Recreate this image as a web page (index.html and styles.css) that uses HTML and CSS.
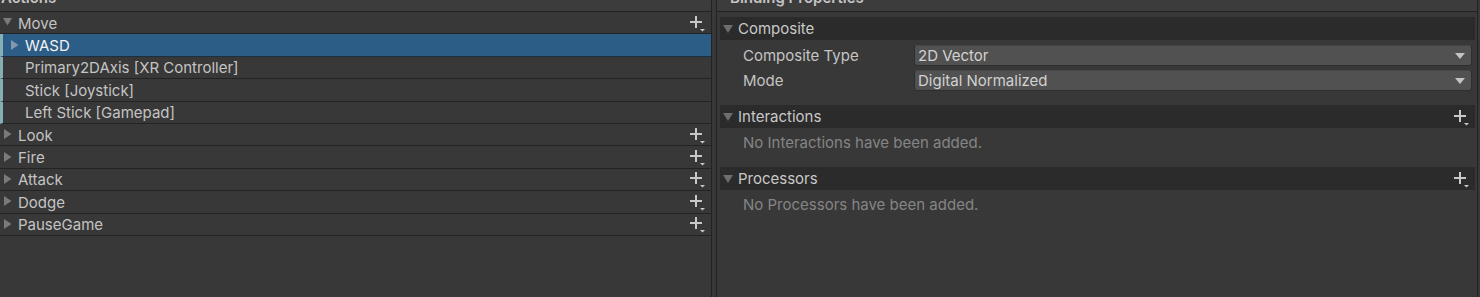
FILE: index.html
```html
<!DOCTYPE html>
<html>
<head>
<meta charset="utf-8">
<link rel="stylesheet" href="styles.css">
</head>
<body>
<div class="app">
  <div class="pane left">
    <div class="pane-head"><span class="pane-title">Actions</span></div>
    <div class="tree">
      <div class="row action">
        <svg class="fold" width="10" height="10" viewBox="0 0 10 10"><path d="M0 1H9L4.5 8.5Z"/></svg>
        <span class="label">Move</span>
        <svg class="plus" width="16" height="16" viewBox="0 0 16 16"><rect x="0" y="5" width="12" height="2"/><rect x="5" y="0" width="2" height="12"/><path d="M10 13H15L12.5 15.5Z"/></svg>
      </div>
      <div class="row binding selected">
        <svg class="fold" width="10" height="10" viewBox="0 0 10 10"><path d="M1 0V10L8.5 5Z"/></svg>
        <span class="label">WASD</span>
      </div>
      <div class="row binding"><span class="label">Primary2DAxis [XR Controller]</span></div>
      <div class="row binding"><span class="label">Stick [Joystick]</span></div>
      <div class="row binding"><span class="label">Left Stick [Gamepad]</span></div>
      <div class="row action">
        <svg class="fold" width="10" height="10" viewBox="0 0 10 10"><path d="M1 0V10L8.5 5Z"/></svg>
        <span class="label">Look</span>
        <svg class="plus" width="16" height="16" viewBox="0 0 16 16"><rect x="0" y="5" width="12" height="2"/><rect x="5" y="0" width="2" height="12"/><path d="M10 13H15L12.5 15.5Z"/></svg>
      </div>
      <div class="row action">
        <svg class="fold" width="10" height="10" viewBox="0 0 10 10"><path d="M1 0V10L8.5 5Z"/></svg>
        <span class="label">Fire</span>
        <svg class="plus" width="16" height="16" viewBox="0 0 16 16"><rect x="0" y="5" width="12" height="2"/><rect x="5" y="0" width="2" height="12"/><path d="M10 13H15L12.5 15.5Z"/></svg>
      </div>
      <div class="row action">
        <svg class="fold" width="10" height="10" viewBox="0 0 10 10"><path d="M1 0V10L8.5 5Z"/></svg>
        <span class="label">Attack</span>
        <svg class="plus" width="16" height="16" viewBox="0 0 16 16"><rect x="0" y="5" width="12" height="2"/><rect x="5" y="0" width="2" height="12"/><path d="M10 13H15L12.5 15.5Z"/></svg>
      </div>
      <div class="row action">
        <svg class="fold" width="10" height="10" viewBox="0 0 10 10"><path d="M1 0V10L8.5 5Z"/></svg>
        <span class="label">Dodge</span>
        <svg class="plus" width="16" height="16" viewBox="0 0 16 16"><rect x="0" y="5" width="12" height="2"/><rect x="5" y="0" width="2" height="12"/><path d="M10 13H15L12.5 15.5Z"/></svg>
      </div>
      <div class="row action">
        <svg class="fold" width="10" height="10" viewBox="0 0 10 10"><path d="M1 0V10L8.5 5Z"/></svg>
        <span class="label">PauseGame</span>
        <svg class="plus" width="16" height="16" viewBox="0 0 16 16"><rect x="0" y="5" width="12" height="2"/><rect x="5" y="0" width="2" height="12"/><path d="M10 13H15L12.5 15.5Z"/></svg>
      </div>
    </div>
  </div>
  <div class="splitter"></div>
  <div class="pane right">
    <div class="pane-head"><span class="pane-title">Binding Properties</span></div>
    <div class="props">
      <div class="section-head">
        <svg class="hfold" width="10" height="10" viewBox="0 0 10 10"><path d="M0 1H10L5 9Z"/></svg>
        <span>Composite</span>
      </div>
      <div class="section-body composite">
        <div class="field">
          <span class="field-label">Composite Type</span>
          <div class="dropdown"><span>2D Vector</span><svg class="caret" width="10" height="6" viewBox="0 0 10 6"><path d="M0 0H10L5 6Z"/></svg></div>
        </div>
        <div class="field">
          <span class="field-label">Mode</span>
          <div class="dropdown"><span>Digital Normalized</span><svg class="caret" width="10" height="6" viewBox="0 0 10 6"><path d="M0 0H10L5 6Z"/></svg></div>
        </div>
      </div>
      <div class="section-head">
        <svg class="hfold" width="10" height="10" viewBox="0 0 10 10"><path d="M0 1H10L5 9Z"/></svg>
        <span>Interactions</span>
        <svg class="plus" width="16" height="16" viewBox="0 0 16 16"><rect x="0" y="5" width="12" height="2"/><rect x="5" y="0" width="2" height="12"/><path d="M10 13H15L12.5 15.5Z"/></svg>
      </div>
      <div class="section-body message">No Interactions have been added.</div>
      <div class="section-head">
        <svg class="hfold" width="10" height="10" viewBox="0 0 10 10"><path d="M0 1H10L5 9Z"/></svg>
        <span>Processors</span>
        <svg class="plus" width="16" height="16" viewBox="0 0 16 16"><rect x="0" y="5" width="12" height="2"/><rect x="5" y="0" width="2" height="12"/><path d="M10 13H15L12.5 15.5Z"/></svg>
      </div>
      <div class="section-body message">No Processors have been added.</div>
    </div>
  </div>
</div>
</body>
</html>
```

FILE: styles.css
```css
* { box-sizing: border-box; }
html, body {
  margin: 0;
  padding: 0;
  width: 1480px;
  height: 297px;
  overflow: hidden;
  background: #383838;
  font-family: Inter, "Noto Sans", sans-serif;
  font-size: 15px;
  color: #c4c4c4;
}
.app {
  display: flex;
  height: 297px;
}
.pane {
  background: #383838;
  display: flex;
  flex-direction: column;
}
.left {
  width: 712px;
  border-right: 1px solid #232323;
}
.splitter {
  width: 4px;
  background: #383838;
}
.right {
  flex: 1;
  border-left: 1px solid #232323;
  border-right: 1px solid #232323;
  margin-right: 2px;
}
.pane-head {
  height: 12px;
  background: #3c3c3c;
  border-bottom: 1px solid #232323;
  overflow: hidden;
  flex: none;
}
.pane-title {
  display: block;
  font-weight: 600;
  line-height: 16px;
  margin-top: -10px;
  color: #c4c4c4;
}
.left .pane-title { padding-left: 1px; }
.right .pane-title { padding-left: 13px; }

.tree { display: flex; flex-direction: column; }
.row {
  height: 22.4px;
  border-bottom: 1px solid #232323;
  display: flex;
  align-items: center;
  flex: none;
}
.row .label { line-height: 18px; margin-top: 2px; }
.action { padding-left: 3px; }
.action .label { margin-left: 5px; }
.fold { fill: #7a7a7a; flex: none; margin-top: -1px; }
.binding {
  border-left: 3px solid #85afb4;
  padding-left: 22px;
}
.binding.selected {
  background: #2c5d87;
  border-bottom-color: #1b2f42;
  padding-left: 7px;
}
.binding.selected .fold { fill: #8198ad; }
.binding.selected .label { color: #f2f2f2; margin-left: 5px; }
.plus {
  fill: #c8c8c8;
  margin-left: auto;
  margin-right: 5px;
  margin-top: 2px;
  flex: none;
}

.props {
  display: flex;
  flex-direction: column;
  padding: 5px 2px 0 3px;
}
.section-head {
  height: 23px;
  background: #2b2b2b;
  display: flex;
  align-items: center;
  padding-left: 3px;
  color: #c8c8c8;
}
.section-head span { margin-left: 5px; }
.hfold { fill: #6e6e6e; flex: none; }
.section-head .plus { margin-right: 5px; }
.composite {
  padding: 3px 0 12px 23px;
}
.field {
  height: 25px;
  display: flex;
  align-items: center;
}
.field-label {
  width: 171px;
}
.dropdown {
  flex: 1;
  height: 21px;
  margin-right: 3px;
  background: #515151;
  border: 1px solid #2e2e2e;
  border-top-color: #454545;
  border-radius: 3px;
  display: flex;
  align-items: center;
  padding-left: 3px;
  color: #d2d2d2;
}
.dropdown .caret {
  margin-left: auto;
  margin-right: 6px;
  fill: #c4c4c4;
}
.message {
  height: 39px;
  padding-left: 23px;
  padding-top: 4px;
  line-height: 22px;
  color: #858585;
}
```
